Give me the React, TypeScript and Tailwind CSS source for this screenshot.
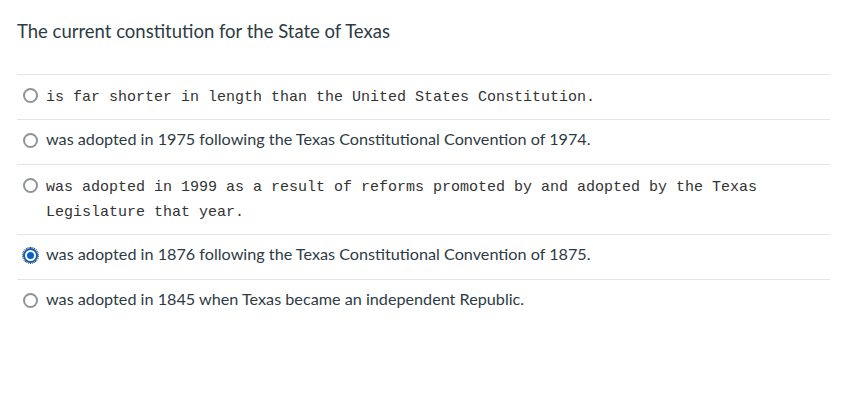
import React from "react";

type Answer = {
  text: string;
  mono?: boolean;
  checked?: boolean;
};

const answers: Answer[] = [
  { text: "is far shorter in length than the United States Constitution.", mono: true },
  { text: "was adopted in 1975 following the Texas Constitutional Convention of 1974." },
  {
    text: "was adopted in 1999 as a result of reforms promoted by and adopted by the Texas Legislature that year.",
    mono: true,
  },
  { text: "was adopted in 1876 following the Texas Constitutional Convention of 1875.", checked: true },
  { text: "was adopted in 1845 when Texas became an independent Republic." },
];

const Radio = ({ checked }: { checked?: boolean }) =>
  checked ? (
    <span className="flex h-[15px] w-[15px] items-center justify-center rounded-full border-2 border-[#0b5fc4] bg-white outline-1 outline-offset-0 outline-dotted outline-[#222]">
      <span className="h-[7px] w-[7px] rounded-full bg-[#0b5fc4]" />
    </span>
  ) : (
    <span className="block h-[15px] w-[15px] rounded-full border-2 border-[#8f949a] bg-white" />
  );

export default function App() {
  return (
    <div className="min-h-[417px] w-[843px] bg-white pl-[17px] pr-[13px]" style={{ fontFamily: "Lato, 'Liberation Sans', sans-serif" }}>
      <h1 className="pt-[18px] text-[18.5px] leading-[27px] font-normal text-[#2d3b45]">
        The current constitution for the State of Texas
      </h1>
      <div className="mt-[29px]">
        {answers.map((a, i) => (
          <label key={i} className="flex items-start border-t border-[#e3e4e6] pl-[6px]">
            <span className="shrink-0 pt-[12.5px]">
              <Radio checked={a.checked} />
            </span>
            {a.mono ? (
              <span
                className="ml-[8px] max-w-[730px] pt-[10px] pb-[9px] text-[15px] leading-[25px] text-[#333]"
                style={{ fontFamily: "'Liberation Mono', 'Courier New', monospace" }}
              >
                {a.text}
              </span>
            ) : (
              <span className="ml-[8px] pt-[6px] pb-[13px] text-[16.2px] leading-[25px] text-[#2d3b45]">
                {a.text}
              </span>
            )}
          </label>
        ))}
      </div>
    </div>
  );
}
